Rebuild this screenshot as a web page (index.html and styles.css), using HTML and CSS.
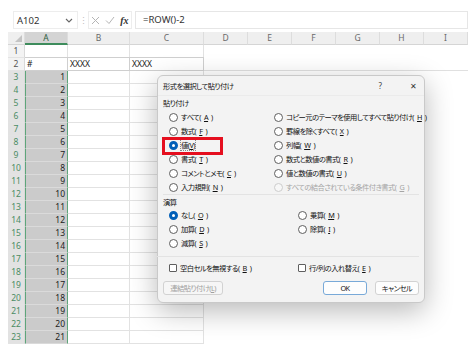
FILE: index.html
```html
<!DOCTYPE html>
<html lang="ja">
<head>
    <meta charset="UTF-8">
    <title>形式を選択して貼り付け</title>
    <link rel="stylesheet" href="styles.css">
</head>
<body>
<div class="excel">
    <div class="formula-bar">
        <div class="name-box">
            <span>A102</span>
            <svg width="8" height="5" viewBox="0 0 8 5"><path d="M1 1l3 3 3-3" fill="none" stroke="#666" stroke-width="1.1"/></svg>
        </div>
        <div class="fb-dots">⋮</div>
        <div class="fb-btns">
            <svg width="9" height="9" viewBox="0 0 9 9"><path d="M1 1l7 7M8 1l-7 7" stroke="#b5b5b5" stroke-width="1"/></svg>
            <svg width="10" height="9" viewBox="0 0 10 9"><path d="M1 4.5l3 3 5-6.5" fill="none" stroke="#b5b5b5" stroke-width="1"/></svg>
            <span class="fx">fx</span>
        </div>
        <div class="fb-input">=ROW()-2</div>
    </div>

    <div class="sheet" id="sheet">
        <div class="hd corner"></div>
        <div class="hd sel">A</div>
        <div class="hd">B</div>
        <div class="hd">C</div>
        <div class="hd">D</div>
        <div class="hd">E</div>
        <div class="hd">F</div>
        <div class="hd">G</div>
        <div class="hd">H</div>
        <div class="hd">I</div>

        <div class="rh">1</div>
        <div class="c"></div><div class="c"></div><div class="c"></div><div class="fill"></div>

        <div class="rh">2</div>
        <div class="c t">#</div><div class="c t">XXXX</div><div class="c t">XXXX</div><div class="fill line"></div>
    </div>

    <div class="dialog">
        <div class="dlg-title">
            <span class="dlg-name">形式を選択して貼り付け</span>
            <span class="dlg-help">?</span>
            <span class="dlg-close">✕</span>
        </div>
        <div class="dlg-body">
            <div class="group-label">貼り付け</div>
            <div class="opts paste">
                <div class="opt"><i class="radio"></i>すべて(<u>A</u>)</div>
                <div class="opt"><i class="radio"></i>コピー元のテーマを使用してすべて貼り付け(<u>H</u>)</div>
                <div class="opt"><i class="radio"></i>数式(<u>F</u>)</div>
                <div class="opt"><i class="radio"></i>罫線を除くすべて(<u>X</u>)</div>
                <div class="opt"><i class="radio on"></i><span class="focus">値(<u>V</u>)</span><span class="mark"></span></div>
                <div class="opt"><i class="radio"></i>列幅(<u>W</u>)</div>
                <div class="opt"><i class="radio"></i>書式(<u>T</u>)</div>
                <div class="opt"><i class="radio"></i>数式と数値の書式(<u>R</u>)</div>
                <div class="opt"><i class="radio"></i>コメントとメモ(<u>C</u>)</div>
                <div class="opt"><i class="radio"></i>値と数値の書式(<u>U</u>)</div>
                <div class="opt"><i class="radio"></i>入力規則(<u>N</u>)</div>
                <div class="opt off"><i class="radio"></i>すべての結合されている条件付き書式(<u>G</u>)</div>
            </div>

            <div class="group-label sep">演算</div>
            <div class="opts ops">
                <div class="opt"><i class="radio on"></i>なし(<u>O</u>)</div>
                <div class="opt"><i class="radio"></i>乗算(<u>M</u>)</div>
                <div class="opt"><i class="radio"></i>加算(<u>D</u>)</div>
                <div class="opt"><i class="radio"></i>除算(<u>I</u>)</div>
                <div class="opt"><i class="radio"></i>減算(<u>S</u>)</div>
            </div>

            <div class="opts ops checks">
                <div class="opt"><i class="check"></i>空白セルを無視する(<u>B</u>)</div>
                <div class="opt"><i class="check"></i>行/列の入れ替え(<u>E</u>)</div>
            </div>

            <div class="buttons">
                <div class="btn dis">連結貼り付け(<u>L</u>)</div>
                <div class="btn def">OK</div>
                <div class="btn">キャンセル</div>
            </div>
        </div>
    </div>
</div>
<script>
    let sheet = document.getElementById('sheet');
    let rows = '';
    for (let r = 3; r <= 23; r++) {
        rows += `<div class="rh sel">${r}</div>`;
        rows += `<div class="c a">${r - 2}</div>`;
        rows += `<div class="c"></div><div class="c"></div><div class="fill"></div>`;
    }
    sheet.insertAdjacentHTML('beforeend', rows);
</script>
</body>
</html>
```

FILE: styles.css
```css
*{
    box-sizing: border-box;
}
body{
    margin: 0;
    background: #fff;
    font-family: "Noto Sans", "Noto Sans CJK JP", sans-serif;
    color: #222;
}
.excel{
    position: relative;
    width: 474px;
    height: 349px;
    overflow: hidden;
    padding: 11px 0 0 8px;
}

/* formula bar */
.formula-bar{
    display: flex;
    align-items: center;
    width: 460px;
    height: 18px;
    margin-bottom: 3px;
}
.name-box{
    display: flex;
    align-items: center;
    justify-content: space-between;
    width: 65px;
    height: 18px;
    margin-left: 5px;
    padding: 0 4px 0 3px;
    border: 1px solid #ededed;
    font-size: 9.5px;
    color: #333;
}
.fb-dots{
    width: 10px;
    text-align: center;
    font-size: 9px;
    color: #c0c0c0;
}
.fb-btns{
    display: flex;
    align-items: center;
    justify-content: space-around;
    width: 44px;
    height: 18px;
    border: 1px solid #ededed;
}
.fx{
    font-family: "Liberation Serif", serif;
    font-style: italic;
    font-weight: bold;
    font-size: 10px;
    color: #333;
}
.fb-input{
    flex: 1;
    height: 18px;
    margin-left: 3px;
    padding-left: 7px;
    border: 1px solid #e6e6e6;
    font-size: 9.5px;
    line-height: 16px;
    color: #333;
}

/* sheet */
.sheet{
    display: grid;
    grid-template-columns: 17px 43px 62px 74px repeat(6, 44px);
    grid-auto-rows: 13px;
    font-size: 8.5px;
}
.hd{
    background: #efefef;
    border-right: 1px solid #dddddd;
    border-bottom: 1px solid #d5d5d5;
    text-align: center;
    line-height: 12px;
    color: #6a6a6a;
}
.hd.sel{
    background: #d4d4d4;
    border-bottom: 2px solid #3e8c5c;
    color: #2d5e40;
}
.corner{
    position: relative;
}
.corner::after{
    content: "";
    position: absolute;
    right: 2px;
    bottom: 2px;
    border-left: 7px solid transparent;
    border-bottom: 7px solid #c4c4c4;
}
.rh{
    background: #f3f3f3;
    border-right: 1px solid #d9d9d9;
    border-bottom: 1px solid #e3e3e3;
    text-align: center;
    line-height: 12px;
    color: #555;
}
.rh.sel{
    background: #e2e2e2;
    color: #4a8c64;
}
.c{
    padding: 0 2px;
    border-right: 1px solid #e2e2e2;
    border-bottom: 1px solid #e2e2e2;
    line-height: 12px;
    color: #222;
}
.c.t{
    border-top: 1px solid #cfcfcf;
    border-right-color: #cfcfcf;
    border-bottom-color: #cfcfcf;
    margin-top: -1px;
    line-height: 12px;
}
.c.a{
    background: #cbcbcb;
    text-align: right;
    border-left: 1px solid #5ea57a;
    border-right: 1px solid #5ea57a;
    border-bottom-color: #dadada;
}
.fill{
    grid-column: span 6;
}
.fill.line{
    border-bottom: 1px solid #e0e0e0;
}

/* dialog */
.dialog{
    position: absolute;
    left: 157px;
    top: 75px;
    width: 268px;
    height: 228px;
    background: #f3f3f3;
    border: 1px solid #c9c9c9;
    border-radius: 6px;
    box-shadow: 0 8px 28px rgba(0, 0, 0, .28);
    font-family: "Noto Sans", "Noto Sans CJK JP", sans-serif;
    font-size: 7.3px;
    letter-spacing: -0.55px;
    font-feature-settings: "palt";
    color: #111;
}
.dlg-title{
    display: flex;
    align-items: center;
    height: 20px;
    padding-left: 5px;
    border-bottom: 1px solid #ebebeb;
}
.dlg-name{
    flex: 1;
}
.dlg-help{
    width: 22px;
    margin-right: 11px;
    text-align: center;
    font-size: 8px;
    color: #444;
}
.dlg-close{
    width: 22px;
    text-align: center;
    font-size: 8px;
    color: #333;
}
.dlg-body{
    padding: 0 5px;
}
.group-label{
    height: 14px;
    line-height: 14px;
}
.group-label.sep{
    border-top: 1px solid #e3e3e3;
}
.opts{
    display: grid;
    grid-auto-rows: 14px;
    padding-left: 6px;
}
.paste{
    grid-template-columns: 105px 1fr;
}
.ops{
    grid-template-columns: 129px 1fr;
}
.checks{
    margin-top: 6px;
    padding-top: 4px;
    border-top: 1px solid #e3e3e3;
    margin-left: -6px;
    padding-left: 12px;
}
.opt{
    position: relative;
    display: flex;
    align-items: center;
    gap: 3px;
    white-space: nowrap;
}
.opt u{
    text-underline-offset: 1px;
}
.radio{
    flex: none;
    width: 9px;
    height: 9px;
    border: 1px solid #5f5f5f;
    border-radius: 50%;
    background: #fff;
}
.radio.on{
    border: 3px solid #005fb8;
}
.opt.off{
    color: #a5a5a5;
}
.opt.off .radio{
    border-color: #cdcdcd;
    background: #f7f7f7;
}
.check{
    flex: none;
    width: 8px;
    height: 8px;
    border: 1px solid #5f5f5f;
    border-radius: 1px;
    background: #fff;
}
.focus{
    outline: 1px dotted #888;
    outline-offset: 0;
}
.mark{
    position: absolute;
    left: -7px;
    top: -1px;
    width: 61px;
    height: 18px;
    border: 3px solid #e50f1f;
}
.buttons{
    display: flex;
    gap: 8px;
    margin-top: 6px;
}
.btn{
    width: 44px;
    height: 14px;
    border: 1px solid #d2d2d2;
    border-radius: 3px;
    background: #fdfdfd;
    text-align: center;
    line-height: 12px;
}
.btn.dis{
    width: 60px;
    margin-right: auto;
    background: #f6f6f6;
    color: #a0a0a0;
}
.btn.def{
    border-color: #78a9d8;
}
```
